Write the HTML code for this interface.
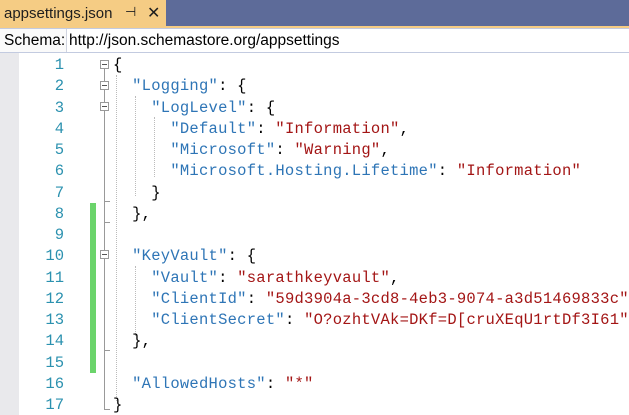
<!DOCTYPE html>
<html><head><style>
body{margin:0;width:629px;height:415px;overflow:hidden;background:#fff;position:relative;font-family:"Liberation Sans",sans-serif}
.top{position:absolute;left:0;top:0;width:629px;height:26px;background:#5d6b99}
.tab{position:absolute;left:0;top:0;width:166px;height:28px;background:#f5cc84;font-size:15px;color:#1e1e1e}
.ol{position:absolute;left:0;top:26px;width:629px;height:2px;background:#f5cc84}
.schema{position:absolute;left:0;top:28px;width:629px;height:25px;background:#fafafa;border-top:1px solid #c3cbe0;border-bottom:1px solid #c3cbe0;box-sizing:border-box;font-size:15.5px}
.box{position:absolute;left:66px;top:0;right:0;height:23px;background:#fff;border-left:1px solid #d0d4e0}
.gut{position:absolute;left:0;top:53px;width:19px;height:362px;background:#e9e9ec}
.ln{position:absolute;left:20px;width:44px;text-align:right;color:#2b91af;font-family:"Liberation Mono",monospace;font-size:15.5px}
.c{position:absolute;left:113px;white-space:pre;font-family:"Liberation Mono",monospace;font-size:15.5px;letter-spacing:0.25px;color:#000}
.k{color:#2e75b6}.s{color:#a31515}
.green{position:absolute;left:90px;top:203px;width:6px;height:170px;background:#6bd46b}
.fold{position:absolute;left:100px;width:9px;height:9px;border:1px solid #999;background:#fff;box-sizing:border-box}
.fold:after{content:"";position:absolute;left:1px;top:3px;width:5px;height:1px;background:#555}
.vl{position:absolute;left:104px;width:1px;background:#999}
.hl{position:absolute;left:104px;width:6px;height:1px;background:#999}
.dg{position:absolute;width:0;border-left:1px dotted #bbb}
</style></head><body>
<div class="top"></div>
<div class="tab"><span style="position:absolute;left:4px;top:5px">appsettings.json</span><span style="position:absolute;left:125px;top:4px;font-size:13px">⊣</span><span style="position:absolute;left:147px;top:3px;font-size:16px">✕</span></div>
<div class="ol"></div>
<div class="schema"><span style="position:absolute;left:4px;top:3px">Schema:</span><div class="box"><span style="position:absolute;left:2px;top:3px">http://json.schemastore.org/appsettings</span></div></div>
<div class="gut"></div>
<div class="green"></div>
<div class="vl" style="top:69px;height:340px"></div>
<div class="fold" style="top:60px"></div>
<div class="fold" style="top:81px"></div>
<div class="fold" style="top:102px"></div>
<div class="fold" style="top:250px"></div>
<div class="hl" style="top:201px"></div>
<div class="hl" style="top:222px"></div>
<div class="hl" style="top:350px"></div>
<div class="hl" style="top:409px"></div>
<div class="dg" style="left:116px;top:75px;height:326px"></div>
<div class="dg" style="left:135px;top:96px;height:100px"></div>
<div class="dg" style="left:154px;top:117px;height:60px"></div>
<div class="dg" style="left:135px;top:266px;height:70px"></div>
<div id="lines"></div>
<script>
var L=[
'{',
'  <span class=k>"Logging"</span>: {',
'    <span class=k>"LogLevel"</span>: {',
'      <span class=k>"Default"</span>: <span class=s>"Information"</span>,',
'      <span class=k>"Microsoft"</span>: <span class=s>"Warning"</span>,',
'      <span class=k>"Microsoft.Hosting.Lifetime"</span>: <span class=s>"Information"</span>',
'    }',
'  },',
'',
'  <span class=k>"KeyVault"</span>: {',
'    <span class=k>"Vault"</span>: <span class=s>"sarathkeyvault"</span>,',
'    <span class=k>"ClientId"</span>: <span class=s>"59d3904a-3cd8-4eb3-9074-a3d51469833c"</span>,',
'    <span class=k>"ClientSecret"</span>: <span class=s>"O?ozhtVAk=DKf=D[cruXEqU1rtDf3I61"</span>',
'  },',
'',
'  <span class=k>"AllowedHosts"</span>: <span class=s>"*"</span>',
'}'];
var h='';for(var i=0;i<17;i++){var t=56+i*21.25;h+='<div class=ln style="top:'+t+'px">'+(i+1)+'</div><div class=c style="top:'+t+'px">'+L[i]+'</div>';}
document.getElementById('lines').innerHTML=h;
</script>
</body></html>
